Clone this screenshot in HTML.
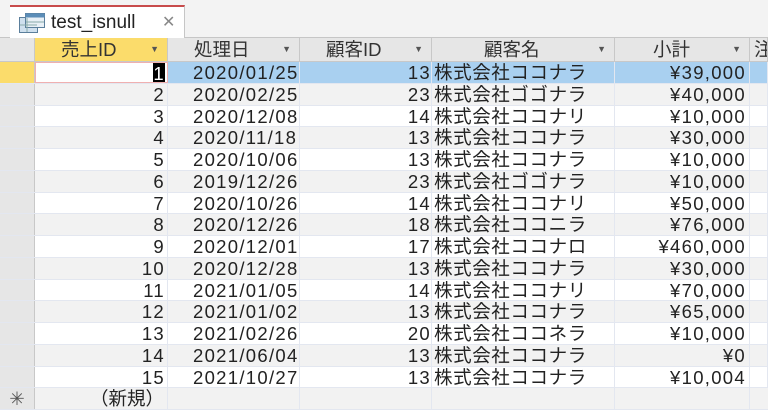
<!DOCTYPE html>
<html><head><meta charset="utf-8"><style>
body{margin:0;width:768px;height:410px;overflow:hidden;background:#fff;font-family:"Liberation Sans","Noto Sans CJK JP",sans-serif;position:relative}
.top{position:absolute;left:0;top:0;width:768px;height:38px;background:#f3f3f3;border-bottom:1px solid #c6c6c6;box-sizing:border-box}
.tab{position:absolute;left:10px;top:5px;width:175px;height:34px;background:#fff;border-top:2px solid #c84b4b;border-right:1px solid #c6c6c6;box-sizing:border-box}
.tab .t{position:absolute;left:41px;top:5px;font-size:19px;color:#222}
.tab .x{position:absolute;left:152px;top:5px;font-size:16px;color:#888}
.row{position:absolute;left:0;width:768px;height:21.75px;border-bottom:1px solid #e3e7f0;box-sizing:border-box;font-size:18.5px;color:#222}
.c{position:absolute;top:0;height:100%;line-height:21px;border-right:1px solid #e3e7f0;box-sizing:border-box;white-space:nowrap;overflow:hidden}
.r{text-align:right}
.n{letter-spacing:1.3px}
.j{letter-spacing:0.6px}
.hdr{position:absolute;top:38px;left:0;width:768px;height:24px;background:#e6e6e6;border-bottom:1px solid #c8c8c8;box-sizing:border-box;font-size:18.5px;color:#333}
.hdr .c{line-height:23px;border-right:1px solid #c8c8c8;text-align:center}
.hdr .c span.a{position:absolute;right:8px;top:0;font-size:9px;color:#555}
</style></head><body>
<div class="top"></div>
<div class="tab">
<svg style="position:absolute;left:9px;top:6px" width="26" height="20" viewBox="0 0 26 20"><rect x="0.5" y="4.5" width="18" height="15" fill="#cfe0ee" stroke="#5b7f9c"/><rect x="6.5" y="0.5" width="19" height="14" fill="#e8f0f6" stroke="#5b7f9c"/><rect x="6.5" y="0.5" width="19" height="4" fill="#5b8db8"/><line x1="7" y1="9" x2="25" y2="9" stroke="#8aa"/><line x1="1" y1="12" x2="18" y2="12" stroke="#8aa"/><line x1="8" y1="5" x2="8" y2="19" stroke="#8aa"/></svg>
<span class="t">test_isnull</span><span class="x">✕</span></div>
<div class="hdr">
<div class="c" style="left:0;width:35px"></div>
<div class="c" style="left:35px;width:133px;background:#fbdc6b;text-align:left;padding-left:26px">売上ID<span class="a">▼</span></div>
<div class="c" style="left:168px;width:132px;text-align:left;padding-left:26px">処理日<span class="a">▼</span></div>
<div class="c" style="left:300px;width:132px;text-align:left;padding-left:26px">顧客ID<span class="a">▼</span></div>
<div class="c" style="left:432px;width:183px;text-align:left;padding-left:52px">顧客名<span class="a">▼</span></div>
<div class="c" style="left:615px;width:135px;text-align:left;padding-left:38px">小計<span class="a">▼</span></div>
<div class="c" style="left:750px;width:18px;text-align:left;padding-left:4px">注</div>
</div>
<div id="rows"></div>
<script>
var d=[["1","2020/01/25","13","株式会社ココナラ","¥39,000"],["2","2020/02/25","23","株式会社ゴゴナラ","¥40,000"],["3","2020/12/08","14","株式会社ココナリ","¥10,000"],["4","2020/11/18","13","株式会社ココナラ","¥30,000"],["5","2020/10/06","13","株式会社ココナラ","¥10,000"],["6","2019/12/26","23","株式会社ゴゴナラ","¥10,000"],["7","2020/10/26","14","株式会社ココナリ","¥50,000"],["8","2020/12/26","18","株式会社ココニラ","¥76,000"],["9","2020/12/01","17","株式会社ココナロ","¥460,000"],["10","2020/12/28","13","株式会社ココナラ","¥30,000"],["11","2021/01/05","14","株式会社ココナリ","¥70,000"],["12","2021/01/02","13","株式会社ココナラ","¥65,000"],["13","2021/02/26","20","株式会社ココネラ","¥10,000"],["14","2021/06/04","13","株式会社ココナラ","¥0"],["15","2021/10/27","13","株式会社ココナラ","¥10,004"]];
var h="";
for(var i=0;i<16;i++){var ty=62+i*21.75;var bg=i%2?"#f2f2f2":"#fff";var sb="#e6e6e6";
if(i==0){bg="#a9d0f0";sb="#fbdc6b";}
h+='<div class="row" style="top:'+ty+'px;background:'+bg+'">';
h+='<div class="c" style="left:0;width:35px;background:'+sb+';border-right:1px solid #c8c8c8;text-align:center;color:#555">'+(i==15?'✳':'')+'</div>';
if(i<15){var r=d[i];
h+='<div class="c r n" style="left:35px;width:133px;padding-right:2px;'+(i==0?'background:#fff;border:1px solid #f0b0b0;':'')+'">'+(i==0?'<span style="background:#000;color:#fff">1</span>':r[0])+'</div>';
h+='<div class="c n" style="left:168px;width:132px;padding-left:25px">'+r[1]+'</div>';
h+='<div class="c r n" style="left:300px;width:132px;padding-right:0">'+r[2]+'</div>';
h+='<div class="c j" style="left:432px;width:183px;padding-left:2px">'+r[3]+'</div>';
h+='<div class="c r n" style="left:615px;width:135px;padding-right:3px">'+r[4]+'</div>';
h+='<div class="c" style="left:750px;width:18px"></div>';}
else{h+='<div class="c r" style="left:35px;width:133px;padding-right:3px">（新規）</div><div class="c" style="left:168px;width:132px"></div><div class="c" style="left:300px;width:132px"></div><div class="c" style="left:432px;width:183px"></div><div class="c" style="left:615px;width:135px"></div>';}
h+='</div>';}
document.getElementById("rows").innerHTML=h;
</script>
</body></html>
